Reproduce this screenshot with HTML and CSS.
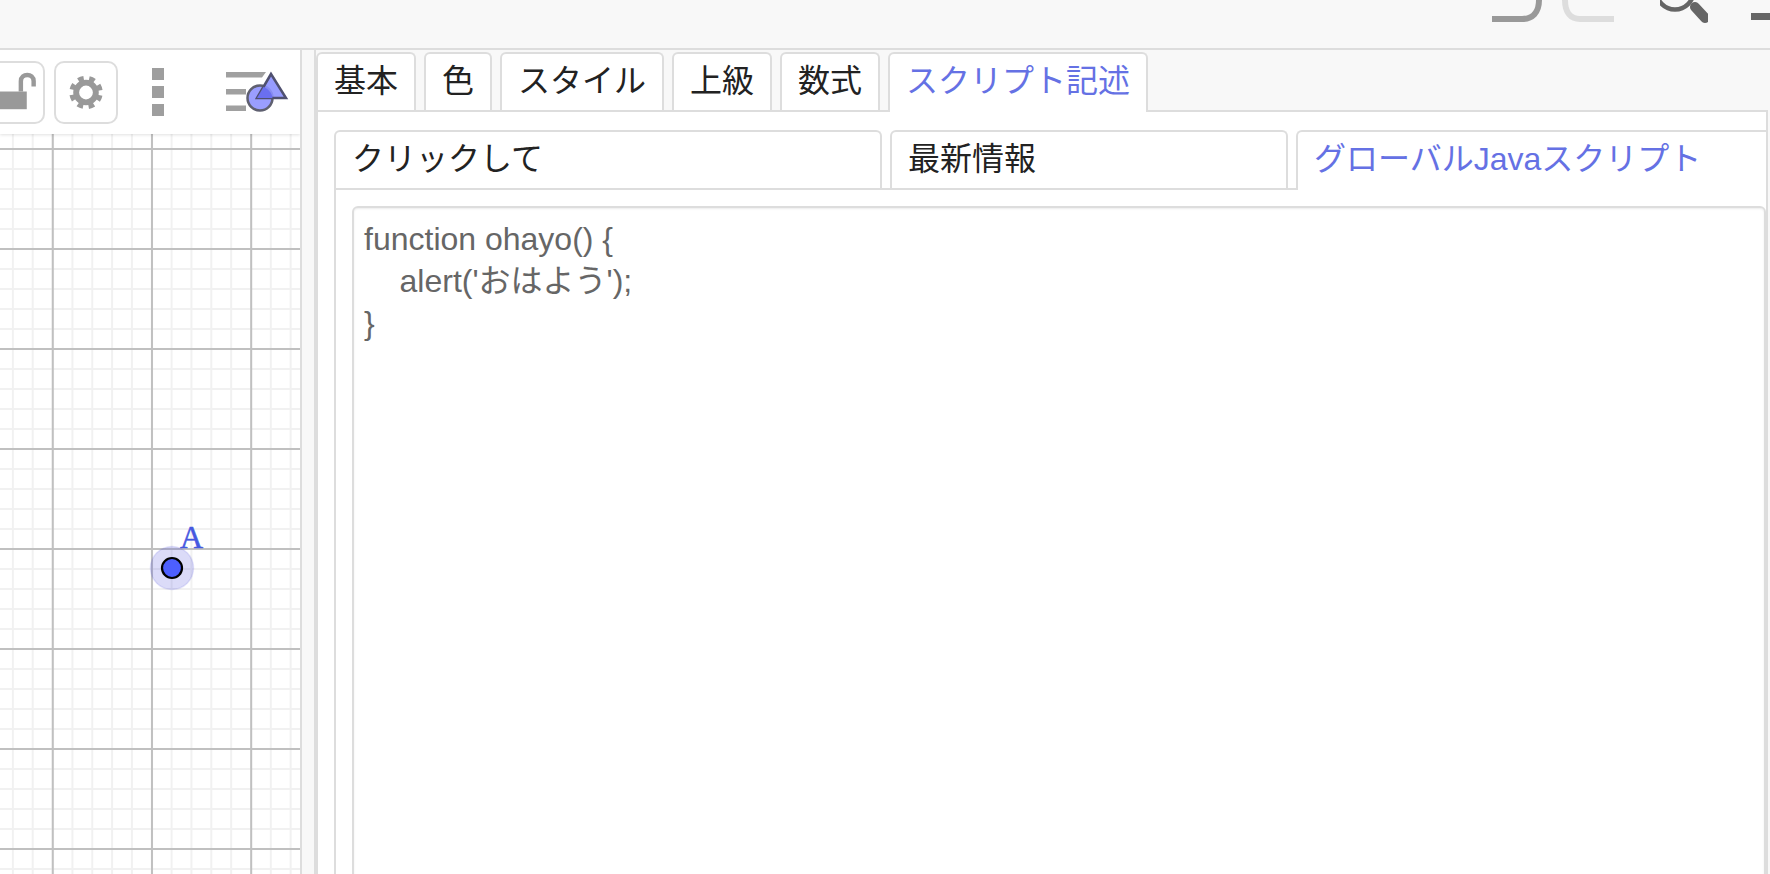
FILE: index.html
```html
<!DOCTYPE html>
<html lang="ja">
<head>
<meta charset="utf-8">
<title>GeoGebra スクリプト記述</title>
<link rel="stylesheet" href="styles.css">
</head>
<body>
<header class="app-header">
  <svg class="hd-icon undo" viewBox="0 0 50 48"><path d="M0 19H30C40 19 47 13 47 0" /></svg>
  <svg class="hd-icon redo" viewBox="0 0 52 48"><path d="M52 19H18C9 19 3 13 3 0" /></svg>
  <svg class="hd-icon search" viewBox="0 0 48 48"><circle cx="15" cy="-9" r="18.5" class="lens"/><path d="M35 7L45 18" class="handle"/></svg>
  <div class="menu-bar"></div>
</header>
<main class="workspace">
  <section class="graphics">
    <div class="toolbar">
      <button class="tool-btn lock" aria-label="lock">
        <svg viewBox="0 0 60 60"><rect x="0" y="29" width="44" height="18" /><path d="M38 29V18.500C38 10 51 10 51 18.500V24" class="shackle"/></svg>
      </button>
      <button class="tool-btn" aria-label="settings">
        <svg viewBox="0 0 60 60"><circle cx="30" cy="30" r="10" class="gear-ring"/><circle cx="30" cy="30" r="14.500" class="gear-teeth"/></svg>
      </button>
      <div class="dots"><span></span><span></span><span></span></div>
      <svg class="style-toggle" viewBox="0 0 64 50">
        <path class="bar" d="M0 0H40L36 5.500H0ZM0 17H20V22.500H0ZM0 33.500H20V39H0Z"/>
        <circle cx="34" cy="26" r="12.500" class="shape"/>
        <path d="M45 2L31 26H60Z" class="shape tri"/>
        <path d="M31 26L37.500 15C42.500 17 46 21 46.500 26Z" class="overlap"/>
      </svg>
    </div>
    <svg class="plane" viewBox="0 0 300 740">
      <defs>
        <pattern id="minor" patternUnits="userSpaceOnUse" x="11.900" y="14" width="19.840" height="20">
          <rect width="2" height="20" fill="#f1f1f1"/><rect width="19.840" height="2" fill="#f1f1f1"/>
        </pattern>
        <pattern id="major" patternUnits="userSpaceOnUse" x="51.800" y="14" width="99.200" height="100">
          <rect width="2" height="100" fill="#c0c0c0"/><rect width="99.200" height="2" fill="#c0c0c0"/>
        </pattern>
      </defs>
      <rect width="300" height="740" fill="url(#minor)"/>
      <rect width="300" height="740" fill="url(#major)"/>
      <circle cx="172" cy="434" r="21.500" class="halo"/>
      <circle cx="172" cy="434" r="10" class="point"/>
      <text x="180" y="414" class="point-label">A</text>
    </svg>
  </section>
  <div class="splitter"></div>
  <section class="properties">
    <nav class="tabs">
      <div class="tab">基本</div>
      <div class="tab">色</div>
      <div class="tab">スタイル</div>
      <div class="tab">上級</div>
      <div class="tab">数式</div>
      <div class="tab active">スクリプト記述</div>
    </nav>
    <div class="panel">
      <nav class="subtabs">
        <div class="subtab first">クリックして</div>
        <div class="subtab second">最新情報</div>
        <div class="subtab third active">グローバルJavaスクリプト</div>
      </nav>
      <div class="subpanel">
        <textarea class="editor" readonly spellcheck="false">function ohayo() {
    alert('おはよう');
}</textarea>
      </div>
    </div>
  </section>
</main>
</body>
</html>
```
FILE: styles.css
```css
* { box-sizing: border-box; }
html, body { height: 100%; }
body {
  margin: 0;
  overflow: hidden;
  display: flex;
  flex-direction: column;
  background: #f8f8f8;
  font-family: "Liberation Sans", "Noto Sans CJK JP", sans-serif;
  font-size: 32px;
  color: #222;
}

/* header */
.app-header {
  flex: none;
  height: 50px;
  display: flex;
  justify-content: flex-end;
  align-items: flex-start;
  background: #f8f8f8;
  border-bottom: 2px solid #ddd;
}
.hd-icon { height: 48px; display: block; fill: none; }
.undo { width: 50px; stroke: #999; stroke-width: 6; }
.redo { width: 52px; margin-left: 20px; stroke: #ddd; stroke-width: 6; }
.search { width: 48px; margin-left: 46px; }
.lens { fill: none; stroke: #666; stroke-width: 4.500; }
.handle { stroke: #666; stroke-width: 10; stroke-linecap: round; }
.menu-bar { width: 19px; height: 7px; margin: 13px 0 0 43px; background: #666; }

/* layout */
.workspace { flex: 1; display: flex; min-height: 0; }

/* graphics view */
.graphics {
  flex: none;
  width: 302px;
  background: #fff;
  border-right: 2px solid #ddd;
  display: flex;
  flex-direction: column;
  overflow: hidden;
}
.toolbar {
  flex: none;
  height: 84px;
  display: flex;
  justify-content: flex-end;
  align-items: flex-start;
  padding: 11px 10px 0 0;
  background: #fff;
  box-shadow: 0 1px 3px rgba(0, 0, 0, .12);
  position: relative;
}
.tool-btn {
  flex: none;
  width: 64px;
  height: 63px;
  margin-right: 9px;
  padding: 0;
  background: #fff;
  border: 2px solid #ddd;
  border-radius: 10px;
}
.tool-btn svg { display: block; width: 60px; height: 59px; }
.lock svg rect { fill: #999; }
.shackle { fill: none; stroke: #999; stroke-width: 4.500; }
.gear-ring { fill: none; stroke: #999; stroke-width: 6; }
.gear-teeth { fill: none; stroke: #999; stroke-width: 5; stroke-dasharray: 5.700 5.690; stroke-dashoffset: -2.850; }
.dots {
  flex: none;
  width: 12px;
  margin: 7px 0 0 25px;
  display: flex;
  flex-direction: column;
  gap: 6px;
}
.dots span { display: block; height: 12px; background: #9e9e9e; }
.style-toggle { flex: none; width: 64px; height: 50px; margin: 11px 0 0 62px; overflow: visible; }
.bar { fill: #a0a0a0; }
.shape { fill: #9a9eff; stroke: #5f6070; stroke-width: 2.500; }
.tri { fill: rgba(140, 145, 255, .9); stroke: #4f5070; stroke-linejoin: miter; }
.overlap { fill: #6a6ff0; }

.plane { flex: 1; display: block; width: 300px; min-height: 0; }
.halo { fill: rgba(77, 77, 220, .2); stroke: rgba(77, 77, 220, .14); stroke-width: 1.500; }
.point { fill: #4d5fff; stroke: #000; stroke-width: 2.200; }
.point-label { font-family: "Liberation Serif", serif; font-size: 32px; fill: #4658e0; stroke: #4658e0; stroke-width: .5px; }

.splitter { flex: none; width: 12px; background: #f8f8f8; }

/* properties */
.properties {
  flex: 1;
  min-width: 0;
  display: flex;
  flex-direction: column;
  border-left: 2px solid #ddd;
}
.tabs {
  flex: none;
  display: flex;
  gap: 8px;
  padding-top: 2px;
  height: 60px;
  position: relative;
  z-index: 1;
}
.tab {
  flex: none;
  height: 58px;
  padding: 0 16px;
  background: #fff;
  border: 2px solid #ddd;
  border-bottom: 0;
  border-radius: 6px 6px 0 0;
  line-height: 54px;
  white-space: nowrap;
  color: #222;
}
.tab.active { height: 60px; color: #6571e4; }

.panel {
  flex: 1;
  min-height: 0;
  margin-right: 2px;
  padding: 18px 0 0 16px;
  background: #fff;
  border-top: 2px solid #ddd;
  border-left: 2px solid #ddd;
  border-right: 2px solid #ddd;
  display: flex;
  flex-direction: column;
}
.subtabs {
  flex: none;
  height: 58px;
  display: flex;
  gap: 8px;
  position: relative;
  z-index: 1;
}
.subtab {
  flex: none;
  height: 58px;
  padding: 0 16px;
  background: #fff;
  border: 2px solid #ddd;
  border-bottom: 0;
  border-radius: 6px 6px 0 0;
  line-height: 54px;
  white-space: nowrap;
}
.subtab.first { width: 548px; }
.subtab.second { width: 398px; }
.subtab.third { flex: 1; border-right: 0; border-radius: 6px 0 0 0; }
.subtab.active { height: 60px; color: #6571e4; }
.subpanel {
  flex: 1;
  min-height: 0;
  padding: 16px 0 0 16px;
  border-top: 2px solid #ddd;
  border-left: 2px solid #ddd;
  overflow: hidden;
}
.editor {
  display: block;
  width: 100%;
  height: 900px;
  margin: 0;
  padding: 10px 10px;
  resize: none;
  outline: none;
  background: #fff;
  border: 2px solid #ddd;
  border-radius: 6px;
  box-shadow: inset 0 1px 2px rgba(0, 0, 0, .08);
  font: inherit;
  line-height: 42px;
  color: #666;
  overflow: hidden;
  white-space: pre;
}
```
